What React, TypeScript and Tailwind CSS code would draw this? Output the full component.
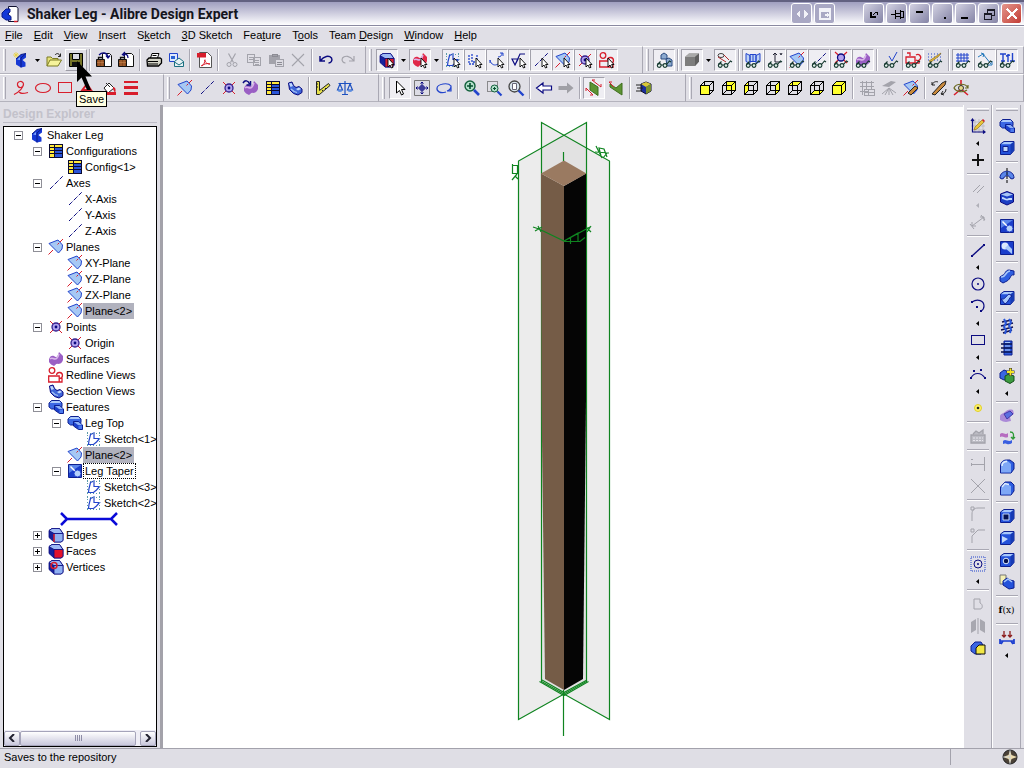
import type { ReactNode } from "react";
import clsx from "clsx";

const INK = "#0b0b80";
const BLUE = "#2244cc";
const SKY = "#a9c6f4";
const RED = "#d81e2c";
const GRAY = "#a3a3ab";

/* ---------- icon primitives ---------- */

const Icon = ({ children, crisp }: { children: ReactNode; crisp?: boolean }) => (
  <svg viewBox="0 0 16 16" className="h-4 w-4 shrink-0 overflow-visible" fill="none" shapeRendering={crisp ? "crispEdges" : undefined} aria-hidden="true">
    {children}
  </svg>
);

const Pointer = () => <path d="M9 6v9l2-2 1.500 3 1.500-.7L12.600 12.500H15z" fill="#fff" stroke="#000" strokeWidth=".9" />;

const Glasses = () => (
  <g stroke="#12352c" strokeWidth="1.100">
    <circle cx="3.200" cy="13.500" r="1.900" fill="#dfeee8" />
    <circle cx="9" cy="13.500" r="1.900" fill="#dfeee8" />
    <path d="M5 13h2M1.500 12.500 4.500 9.500M10.500 12.500l3-3.500 1.500 1" />
  </g>
);

const PlaneShape = () => (
  <>
    <path d="M1 4.500 10 1l4.500 5-.5 4-3.500 4-5-5z" fill="#a6c8f4" stroke={BLUE} />
    <path d="M15 0l-3 3M11 4 9.500 5.500M5 11 .500 15.500" stroke={RED} />
  </>
);

const PointShape = () => (
  <>
    <path d="M2 2l12 12M14 2 2 14" stroke={RED} />
    <circle cx="8" cy="8" r="4" fill="#b3a2ee" stroke="#33208f" strokeWidth="1.300" />
    <circle cx="8" cy="8" r="1.400" fill={INK} />
  </>
);

const SurfaceShape = ({ color = "#9a5fc4" }: { color?: string }) => (
  <>
    <path d="M1 8c1-3 3-4 5-3 2 2 3 1 4-1l1-3 4 4v4c-1 3-3 4-5 4-2-1-2 1-4 2-2-1-4-2-5-4z" fill={color} />
    <path d="M2 8c2-2 3 0 5 0s3-2 4-5" stroke="#d9b6ea" strokeWidth="1.500" />
  </>
);

const SketchShape = () => (
  <>
    <path d="M4.500 3.500 8 2v5.500h5.500l-3 3.500-3 2.500h-5l.5-4z" stroke={BLUE} strokeWidth="1.200" />
    <path d="M1 2.500h13M1 14.500h13M1.500 1v14M13.500 1v14" stroke="#5c9aaa" strokeDasharray="1 2" />
  </>
);

const RedlineShape = () => (
  <g stroke={RED} strokeWidth="1.300">
    <circle cx="4" cy="3.500" r="2.800" />
    <path d="M.700 9h10.500v6H.700zM8.500 8a3 3 0 1 1 3 3.500M11.500 15h2.500v-4" />
  </g>
);

const AxisShape = () => <path d="M2 14 15 1" stroke={INK} strokeDasharray="4 1 1 1" />;

const BoxShape = ({ front = "#3458dd", side = "#16219c", top = "#9db9f5" }: { front?: string; side?: string; top?: string }) => (
  <g stroke={INK} strokeWidth=".8">
    <path d="M1 3.500 4 1.500h7.500l3.500 5v7L13 15H6l-5-4.500z" fill={side} />
    <path d="M1 3.500 4 1.500h7.500l3.500 5H6z" fill={top} />
    <path d="M6 6.500h9V13.500L13 15H6z" fill={front} />
  </g>
);

const TableShape = () => (
  <g shapeRendering="crispEdges">
    <path d="M1.500 1.500h13v13h-13z" fill="#2a55d8" />
    <path d="M2 2h4v12H2zM6 2h8v2H6z" fill="#ffe93b" />
    <path d="M1.500 1.500h13v13h-13zM2 4.500h12M2 7.500h12M2 10.500h12M6.500 2v12" stroke="#0a0a30" />
  </g>
);

const PartShape = () => (
  <>
    <path d="M3 7 8 2.500l5-1v4L9.500 8l3 2.500v4L8 15.500 3 12.500z" fill="#1739d4" />
    <path d="M3 7 8 2.500l5-1L8 6v9.500" stroke="#0a1b88" />
    <path d="M4 7.500 7 5v3z" fill="#7ea5ff" />
  </>
);

/* Blue solid used by the feature column */
const Solid = () => (
  <>
    <path d="M1.500 4 5 1.500h10v9L11.500 14.500h-10z" fill="#2452da" stroke="#0d1f90" />
    <path d="M2 4.200 5.200 2h9.300l-3 2.200z" fill="#a8c8fb" />
    <path d="M11.500 4.500 14.500 2v8.300l-3 4z" fill="#163bb4" />
  </>
);

const ExtrudeShape = () => (
  <>
    <path d="M1 4l2.500-2.500h8L14 4v3l-1 3H3.500L1 8z" fill="#3c68e4" stroke="#0d1f90" />
    <path d="M1.500 4 4 2h7.500L13 4z" fill="#aecbfa" />
    <path d="M6.500 6.500h5l4 3.500v4.500h-4l-5-3.500z" fill="#1c40cc" stroke="#0d1f90" />
    <path d="M7 7h4.500l3.500 3h-4z" fill="#8fb1f6" />
    <path d="M11.500 10.500h3.500v3.500h-3.500z" fill="#4c7aee" />
  </>
);

const TaperShape = () => (
  <>
    <path d="M1.500 1.500h13v13h-13z" fill="#1b3ecb" stroke="#0d1f90" />
    <path d="M2 2h12L2 10z" fill="#5b86ea" />
    <path d="M3.500 3.500l6 6" stroke="#fff" strokeWidth="1.500" />
    <circle cx="10.500" cy="10.500" r="3.500" fill="#b6d1fb" stroke={BLUE} />
  </>
);

const SectionShape = () => (
  <>
    <path d="M1.500 3 5 2l1.500 3.500 2.500 2 3-1 3 2.500v3.500L11 15l-4.500-1.500-4-4z" fill="#3f66d8" stroke={INK} />
    <path d="M2 3.500 4.500 3 6 6 3.500 7zM9 9l3-1.500 2 1.500-3 1.500z" fill="#c2d8fc" />
    <path d="M4 9l3 2.500 3 1" stroke="#a9c6f4" strokeWidth="1.300" />
  </>
);

const CubeView = ({ face, solid }: { face: string; solid?: boolean }) => (
  <>
    {!solid && <path d={face} fill="#ffff2e" />}
    <path d="M1.500 5.500h9v9h-9zM5.500 1.500h9v9h-9zM1.500 5.500l4-4M10.500 5.500l4-4M1.500 14.500l4-4M10.500 14.500l4-4" stroke="#000" />
    {solid && <path d={face} fill="#ffff2e" stroke="#000" />}
  </>
);

const cubeFaces = [
  { label: "Front view", face: "M1.500 5.500h9v9h-9z", solid: true },
  { label: "Back view", face: "M5.500 1.500h9v9h-9z" },
  { label: "Left view", face: "M1.500 5.500l4-4v9l-4 4z" },
  { label: "Right view", face: "M10.500 5.500l4-4v9l-4 4z" },
  { label: "Top view", face: "M1.500 5.500l4-4h9l-4 4z" },
  { label: "Bottom view", face: "M1.500 14.500l4-4h9l-4 4z" },
];

/* ---------- toolbar parts ---------- */

type ToolProps = { label: string; pressed?: boolean; raised?: boolean; disabled?: boolean; crisp?: boolean; children: ReactNode };

const Tool = ({ label, pressed, raised, disabled, crisp, children }: ToolProps) => (
  <button
    type="button"
    aria-label={label}
    disabled={disabled}
    className={clsx(
      "flex h-[22px] w-[22px] shrink-0 items-center justify-center border",
      pressed && "border-t-[#a2a1ab] border-l-[#a2a1ab] border-r-white border-b-white bg-[#efeef3]",
      raised && "border-t-white border-l-white border-r-[#9d9ca6] border-b-[#9d9ca6]",
      !pressed && !raised && "border-transparent",
    )}
  >
    <Icon crisp={crisp}>{children}</Icon>
  </button>
);

const Drop = ({ label }: { label: string }) => (
  <button type="button" aria-label={label} className="flex h-[22px] w-[11px] shrink-0 items-center justify-center">
    <svg viewBox="0 0 5 3" className="h-[3px] w-[5px]"><path d="M0 0h5L2.500 3z" fill="#000" /></svg>
  </button>
);

const Flyout = ({ label, disabled }: { label: string; disabled?: boolean }) => (
  <button type="button" aria-label={label} disabled={disabled} className="flex h-3 w-[22px] shrink-0 items-center justify-center">
    <svg viewBox="0 0 3 5" className="h-[5px] w-[3px]"><path d="M3 0v5L0 2.500z" fill={disabled ? "#b0b0b8" : "#000"} /></svg>
  </button>
);

const Sep = () => <span className="mx-[2px] h-[22px] w-[2px] shrink-0 border-l border-r border-l-[#a9a8b3] border-r-white" />;
const HSep = () => <span className="my-[2px] h-[2px] w-[22px] shrink-0 border-t border-b border-t-[#a9a8b3] border-b-white" />;

const Toolbar = ({ label, className, children }: { label: string; className: string; children: ReactNode }) => (
  <div role="toolbar" aria-label={label} className={clsx("flex h-7 items-center border-t border-r border-b border-t-white border-r-[#a9a8b3] border-b-[#b4b3bd]", className)}>
    <span className="mr-1 ml-[3px] h-[22px] w-[3px] shrink-0 border-r border-l border-r-[#a9a8b3] border-l-white" />
    {children}
  </div>
);

const SideBar = ({ label, children }: { label: string; children: ReactNode }) => (
  <div role="toolbar" aria-label={label} className="flex w-[29px] flex-col items-center border-r border-l border-r-[#a9a8b3] border-l-white">
    <span className="mt-[3px] mb-1 h-[3px] w-[22px] shrink-0 border-t border-b border-t-white border-b-[#a9a8b3]" />
    {children}
  </div>
);

/* ---------- title bar ---------- */

const CaptionButton = ({ label, className, children }: { label: string; className?: string; children: ReactNode }) => (
  <button
    type="button"
    aria-label={label}
    className={clsx("flex h-[21px] w-[21px] items-center justify-center rounded-[3px] border border-white", className ?? "bg-linear-to-br from-[#d3d2e2] to-[#8584a6]")}
  >
    <Icon crisp>{children}</Icon>
  </button>
);

const TitleBar = () => (
  <header className="flex h-[26px] shrink-0 items-center border-t-2 border-b border-t-[#626181] border-b-[#8a89a0] bg-linear-to-b from-[#a09fc0] via-[#cfcedf] to-white pr-[2px] pl-[2px]">
    <Icon>
      <path d="M6.500.500h8l1.500 2v13h-9.500z" fill="#fff" stroke="#101030" />
      <path d="M0 7l4-4h4v3L5.500 8 9 10.500V14H4L0 11z" fill="#1238d8" stroke="#0a1b88" />
      <path d="M12 15.500h3.500" stroke={RED} strokeWidth="1.500" />
    </Icon>
    <h1 className="ml-[9px] flex-1 truncate font-['Roboto',sans-serif] text-[14px] leading-5 font-bold text-[#151520]">Shaker Leg - Alibre Design Expert</h1>
    <div className="flex gap-[2px]">
      <CaptionButton label="Move across screens" className="bg-[#a9a8c4]">
        <path d="M6 4v8L2 8zM10 4v8l4-4z" fill="#f2f2f8" />
      </CaptionButton>
      <CaptionButton label="Maximize across screens" className="bg-[#a9a8c4]">
        <path d="M3 3h10v10H3zM3 5h10M8 9h5M10.500 7v4" stroke="#f2f2f8" strokeWidth="1.500" />
      </CaptionButton>
      <span className="w-[24px]" />
      <CaptionButton label="Send back">
        <path d="M4 6h2v4h4v2H4zM6 9l3-3h3v3h-1V7H9.500L7 10z" fill="#000" />
      </CaptionButton>
      <CaptionButton label="Pin window">
        <path d="M2 8.500h4M6.500 4v9M7 7.500h4v3H7M11.500 4v9M12 5.500h2v6h-2" stroke="#000" />
      </CaptionButton>
      <CaptionButton label="Roll up"><path d="M4 5h7v2H4z" fill="#000" /></CaptionButton>
      <CaptionButton label="Minimize to tray"><path d="M9 11h2v2H9z" fill="#000" /></CaptionButton>
      <CaptionButton label="Minimize"><path d="M3 11h7v2H3z" fill="#000" /></CaptionButton>
      <CaptionButton label="Restore">
        <path d="M3.500 7.500h7v6h-7zM3.500 8.500h7M6.500 7V3.500h7v6H11M6.500 4.500h7" stroke="#1a1a24" />
      </CaptionButton>
      <CaptionButton label="Close" className="bg-linear-to-br from-[#e3958c] to-[#c23a35]">
        <path d="M3 3l10 10M13 3 3 13" stroke="#fff" strokeWidth="2" />
      </CaptionButton>
    </div>
  </header>
);

/* An ampersand marks the access key */
const menus = ["&File", "&Edit", "&View", "&Insert", "S&ketch", "&3D Sketch", "Fea&ture", "T&ools", "Team &Design", "&Window", "&Help"];

const MenuBar = () => (
  <nav className="flex h-[20px] shrink-0 items-center gap-[11px] border-t border-white pb-1 pl-[5px]">
    {menus.map((item) => {
      const [before, after] = item.split("&");
      return (
        <button key={item} type="button" className="whitespace-nowrap">
          {before}
          <u>{after[0]}</u>
          {after.slice(1)}
        </button>
      );
    })}
  </nav>
);

/* ---------- top toolbars ---------- */

const SaveTool = () => (
  <div className="relative">
    <Tool label="Save" raised>
      <path d="M1.500 1.500h13v13h-13z" fill="#77762a" stroke="#000" />
      <path d="M4.500 1.500h7v6h-7z" fill="#d9d9e2" stroke="#000" />
      <path d="M4 10h8v4.500H4z" fill="#111" />
      <path d="M9 11h2v3H9z" fill="#ddd" />
    </Tool>
    <svg viewBox="0 0 17 30" className="pointer-events-none absolute top-[12px] left-[12px] z-20 h-[30px] w-[17px]" aria-hidden="true">
      <path d="M0 0v21l4.500-4.500L10 29h4L8.500 15.500H15z" fill="#000" />
    </svg>
    <span role="tooltip" className="absolute top-[42px] left-[11px] z-10 border border-black bg-[#ffffe1] px-[2px] leading-[14px]">Save</span>
  </div>
);

const StandardBar = () => (
  <Toolbar label="Standard" className="w-[366px]">
    <Tool label="New">
      <PartShape />
      <path d="M3 0v6M0 3h6M1 1l4 4M5 1 1 5" stroke="#e8d23a" strokeWidth=".8" />
    </Tool>
    <Drop label="New options" />
    <Tool label="Open">
      <path d="M1 14V5h4l1.500 1.500H12V9" fill="#e6e27a" stroke="#7a7a22" />
      <path d="M1 14l3-6h11.500l-3.500 6z" fill="#f6f39a" stroke="#7a7a22" />
      <path d="M9 3c1.500-2 4-2 5 1M14.500 1.500V4.500H12" stroke="#222" />
    </Tool>
    <SaveTool />
    <Sep />
    {["Check in", "Check out"].map((label, i) => (
      <Tool key={label} label={label}>
        <path d="M6.500 1.500h7l2 2v11h-9z" fill="#fff" stroke="#111" />
        <path d="M.500 7.500h8v7h-8z" fill="#8a4a1e" stroke="#111" />
        <path d="M2.500 7.500V5.500h4v2" stroke="#111" strokeWidth="1.300" />
        <path d="M1 10.500h7M3 8v6M6 8v6" stroke="#c98750" strokeWidth=".6" />
        <path d={i ? "M10 6c0-4-3-4.500-5-3.500M7 0 4.500 2.500 7 4" : "M3 3c3-3 8-3 9 2M10 3.500 12 6l2-2.500"} stroke={INK} strokeWidth="1.300" />
      </Tool>
    ))}
    <Sep />
    <Tool label="Print">
      <path d="M4.500 6 6 1.500h7L11.500 6" fill="#fff" stroke="#000" />
      <path d="M1 8l2-2h11l1.500 1v4l-3 3H1.500z" fill="#d5d5c8" stroke="#000" strokeWidth="1.300" />
      <path d="M2 9.500h10M2 12h10M6.500 3.500h4" stroke="#000" />
    </Tool>
    <Tool label="Print preview">
      <path d="M1.500 1.500h8v8h-8z" fill="#dfe9fc" stroke={BLUE} />
      <path d="M3 4h4v3H3z" fill="#2b63d4" />
      <path d="M6.500 9.500 11 6l4.500 3.500v5h-9z" fill="#e8f2f5" stroke="#1b6f80" />
      <path d="M6.500 10l4.500 3 4.500-3" stroke="#1b6f80" />
    </Tool>
    <Sep />
    <Tool label="Publish to PDF">
      <path d="M3.500.500h8l4 4v11h-12z" fill="#fff" stroke="#555" />
      <path d="M1 1h9v4.500H1z" fill={RED} />
      <path d="M5 14c3-1 4-4 4-6.500M8.500 8c1 3 3 4 5.500 4-4-1-6 0-8 2" stroke={RED} />
    </Tool>
    <Sep />
    <Tool label="Cut" disabled>
      <path d="M4.500 1.500l5 9M11.500 1.500l-5 9" stroke={GRAY} strokeWidth="1.200" />
      <circle cx="5" cy="12.500" r="2" stroke={GRAY} />
      <circle cx="11" cy="12.500" r="2" stroke={GRAY} />
    </Tool>
    <Tool label="Copy" disabled crisp>
      <path d="M1.500 2.500h7v8h-7zM7.500 5.500h7v8h-7zM3 5h4M3 7h4M9 8h4M9 10h4M9 12h4" stroke={GRAY} />
    </Tool>
    <Tool label="Paste" disabled crisp>
      <path d="M1 3h11v9H1z" fill={GRAY} />
      <path d="M7.500 7.500h8v7h-8z" fill="#dcdbe2" stroke={GRAY} />
      <path d="M4 2h5v2H4zM9 10h5M9 12h5" stroke="#8c8c94" />
    </Tool>
    <Tool label="Delete" disabled><path d="M2 2l12 12M14 2 2 14" stroke={GRAY} strokeWidth="1.100" /></Tool>
    <Sep />
    <Tool label="Undo"><path d="M2 4v5h5M2.500 8.500C6 4 11 3 13.500 6c1.500 3-1 5-3 5" stroke={INK} strokeWidth="1.500" /></Tool>
    <Tool label="Redo" disabled><path d="M14 4v5H9M13.500 8.500C10 4 5 3 2.500 6c-1.500 3 1 5 3 5" stroke={GRAY} strokeWidth="1.200" /></Tool>
  </Toolbar>
);

const SelectionBar = () => (
  <Toolbar label="Selection filters" className="w-[277px]">
    <Tool label="Select faces" pressed><BoxShape front={RED} /><Pointer /></Tool>
    <Drop label="Face filters" />
    <Tool label="Select surfaces" pressed><SurfaceShape color="#e02848" /><Pointer /></Tool>
    <Drop label="Surface filters" />
    <Tool label="Select sketches" pressed><SketchShape /><Pointer /></Tool>
    <Tool label="Select sketch figures" pressed><path d="M2 3v9h5M5 2v8h5V3" stroke={BLUE} strokeDasharray="2 1" strokeWidth="1.300" /><Pointer /></Tool>
    <Tool label="Select dimensions" pressed><path d="M1 8c1 5 5 6 8 4M1 8v3M9 5c3 0 4-2 4-4M11 1h3v3" stroke={BLUE} /><Pointer /></Tool>
    <Tool label="Select annotations" pressed><path d="M1 7h6l-3 6zM4 13 9 2h5" stroke={INK} strokeWidth="1.200" /><Pointer /></Tool>
    <Tool label="Select axes" pressed><AxisShape /><Pointer /></Tool>
    <Tool label="Select planes" pressed><PlaneShape /><Pointer /></Tool>
    <Tool label="Select points" pressed><PointShape /><Pointer /></Tool>
    <Tool label="Select redlines" pressed><RedlineShape /><Pointer /></Tool>
  </Toolbar>
);

const VisibilityBar = () => (
  <Toolbar label="Visibility" className="flex-1">
    <Tool label="Show assembly parts" pressed>
      <path d="M5 3l3-2 3 2v4H5zM10 7l3-1 3 2v6h-5z" fill="#8ba9cf" stroke="#2b4a80" />
      <Glasses />
    </Tool>
    <Sep />
    <Tool label="Shading" pressed>
      <path d="M1 5l4-3.500h10v8L11 14H1z" fill="#7c7c7c" />
      <path d="M1 5l4-3.500h10L11 5z" fill="#a9a9a9" />
      <path d="M11 5l4-3.500v8L11 14z" fill="#5f5f5f" />
    </Tool>
    <Drop label="Shading modes" />
    <Tool label="Show edges" pressed>
      <ellipse cx="4" cy="3.500" rx="3" ry="2" stroke="#444" />
      <path d="M1 5l8 5M7 3l5 5" stroke="#b02a2a" />
      <Glasses />
    </Tool>
    <Sep />
    <Tool label="Show reference geometry" pressed>
      <path d="M1 1.500l4 2v8l-4-2zM15 1.500l-4 2v8l4-2zM5 2.500h6v7H5z" fill="#bdd2f5" stroke={BLUE} />
      <path d="M8 2v7" stroke={BLUE} />
      <Glasses />
    </Tool>
    <Tool label="Show coordinate system" pressed><path d="M8 10V1M6 3l2-2 2 2M8 10h6M13 1l1 2 1-2" stroke="#223" /><Glasses /></Tool>
    <Tool label="Show planes" pressed><PlaneShape /><Glasses /></Tool>
    <Tool label="Show axes" pressed><AxisShape /><Glasses /></Tool>
    <Tool label="Show points" pressed>
      <path d="M2 0l12 11M14 0 2 11" stroke={RED} strokeWidth="1.200" />
      <circle cx="8" cy="5.500" r="3.500" fill="#b3a2ee" stroke={INK} strokeWidth="1.300" />
      <Glasses />
    </Tool>
    <Tool label="Show surfaces" pressed><SurfaceShape /><Glasses /></Tool>
    <Sep />
    <Tool label="Show dimensions"><path d="M6 4l3 5 5-9" stroke={BLUE} /><Glasses /></Tool>
    <Tool label="Show redlines" pressed><path d="M1 5h9v6H1zM2 1h3v3M11 3a3 3 0 1 1 0 5M10 11h4V8" stroke={RED} strokeWidth="1.300" /><Glasses /></Tool>
    <Tool label="Show sketch mode">
      <path d="M1 2h13M1 5h13M1 8h13" stroke={BLUE} strokeDasharray="1 2" />
      <path d="M2 9l9-6 3-2-2 3-8 6z" fill="#e0b63a" stroke="#8a6a10" strokeWidth=".6" />
      <Glasses />
    </Tool>
    <Sep />
    <Tool label="Show grid" pressed><path d="M1 3h13M1 6h13M1 9h13M3 1v9M6 1v9M9 1v9M12 1v9" stroke={BLUE} /><Glasses /></Tool>
    <Tool label="Show constraints" pressed><path d="M1 5l5-3 8 10M4 1l3 1-1 3M15 9v4h-4" stroke="#2277bb" /><Glasses /></Tool>
    <Tool label="Show sketch dimensions" pressed><path d="M1 2h6M4 2v8M2 9h4M9 2v8M7 4l4-1M13.500 1v8M11 9h5" stroke={BLUE} strokeWidth="1.400" /><Glasses /></Tool>
  </Toolbar>
);

const RedlineBar = () => (
  <Toolbar label="Redline" className="w-[164px]">
    <Tool label="Redline freehand"><path d="M1 14.500C6 12 10 8 10.500 4 10 0 4 1 4.500 5c1 4 6 3 6-1M6 10.500c0 4 5 3 9 2" stroke={RED} strokeWidth="1.200" /></Tool>
    <Tool label="Redline ellipse"><ellipse cx="8" cy="8" rx="7.500" ry="4.500" stroke={RED} strokeWidth="1.200" /></Tool>
    <Tool label="Redline rectangle" crisp><path d="M1.500 2.500h13v10h-13z" stroke={RED} /></Tool>
    <Tool label="Redline text"><path d="M1 13 8 4l6 9M4 10h8" stroke={RED} strokeWidth="2" /></Tool>
    <Tool label="Redline color">
      <path d="M3 8l5-5 5 5-6 5z" fill="#fff" stroke="#222" />
      <path d="M5 3l4 4" stroke="#222" />
      <path d="M12 7c3 0 3 4 2 6l-2-4zM1 12h14v3H1z" fill={RED} />
    </Tool>
    <Tool label="Redline weight" crisp><path d="M1 1h14v2H1zM1 6h14v3H1zM1 12h14v3H1z" fill={RED} /></Tool>
  </Toolbar>
);

const InsertBar = () => (
  <Toolbar label="Reference" className="w-[215px]">
    <Tool label="Insert plane"><PlaneShape /></Tool>
    <Tool label="Insert axis"><AxisShape /></Tool>
    <Tool label="Insert point"><PointShape /></Tool>
    <Tool label="Insert surface"><SurfaceShape /><path d="M0 3C2 0 5 0 6.500 4M7.500 1v4h-4" stroke={INK} strokeWidth="1.500" /></Tool>
    <Tool label="Configurations"><TableShape /></Tool>
    <Tool label="Section view"><SectionShape /></Tool>
    <Sep />
    <Tool label="Measure">
      <path d="M1.500 1.500h3v9l9-7 1.500 2-10.500 9h-3z" fill="#e6e04a" stroke="#222" />
      <path d="M2 4h1M2 7h1M7 10l1 1M10 8l1 1" stroke="#222" />
    </Tool>
    <Tool label="Physical properties">
      <path d="M8 1v13M5 14.500h6M1.500 3.500h13M3 4 .500 10h5zM13 4l-2.500 6h5z" stroke="#1c50c0" strokeWidth="1.200" />
      <path d="M.500 10h5a2.500 2 0 0 1-5 0M10.500 10h5a2.500 2 0 0 1-5 0" fill="#5b8de0" />
    </Tool>
  </Toolbar>
);

const ViewBar = () => (
  <Toolbar label="View" className="w-[307px]">
    <Tool label="Select" pressed><path d="M4.500 1v12l3-2.500L9.500 15l2-1-2-4.500H13z" fill="#fff" stroke="#000" /></Tool>
    <Tool label="Pan">
      <path d="M.500.500h15v15H.500z" fill="#dcdce4" stroke="#777" />
      <path d="M8 2v12M2 8h12M6.500 3.500 8 2l1.500 1.500M6.500 12.500 8 14l1.500-1.500M3.500 6.500 2 8l1.500 1.500M12.500 6.500 14 8l-1.500 1.500M6 6h4v4H6z" stroke={INK} />
    </Tool>
    <Tool label="Rotate"><path d="M10 12C4 14 .500 11 1 8c.500-4 11-6 14-2 0 2-1 4-4 5M15 5.500V11h-4" stroke={BLUE} strokeWidth="1.200" /></Tool>
    <Sep />
    <Tool label="Zoom in"><circle cx="6" cy="6" r="5" fill="#b4e0cb" stroke="#12603c" strokeWidth="1.400" /><path d="M6 3v6M3 6h6" stroke="#065030" strokeWidth="1.600" /><path d="M10 10l5 5" stroke={BLUE} strokeWidth="2.600" /></Tool>
    <Tool label="Zoom to window"><path d="M1.500 1.500h10v10h-10z" stroke="#333" strokeDasharray="1 1" /><circle cx="8.500" cy="8.500" r="3.500" fill="#b4e0cb" stroke="#12603c" /><path d="M8.500 7v3M7 8.500h3" stroke="#065030" /><path d="M11.500 11.500l4 4" stroke={BLUE} strokeWidth="2.200" /></Tool>
    <Tool label="Zoom to fit"><circle cx="6.500" cy="6.500" r="5.500" fill="#d8e4ec" stroke="#444" strokeWidth="1.300" /><path d="M4.500 3.500h4v6h-4z" fill="#fff" stroke="#667" /><path d="M10.500 10.500l5 5" stroke={BLUE} strokeWidth="2.400" /></Tool>
    <Sep />
    <Tool label="Previous view"><path d="M.500 8 7 3v3h8.500v4H7v3z" fill="#fff" stroke={INK} strokeWidth="1.200" /></Tool>
    <Tool label="Next view" disabled><path d="M15.500 8 9 2.500V6H.500v4H9v3.500z" fill="#a0a0a6" /></Tool>
    <Sep />
    <Tool label="Orient to plane" pressed><path d="M4 2l8 5v8.500L4 10z" fill="#5d9433" stroke="#3f6e1f" /><path d="M0 8l7 7M0 8v3M7 15H4M6 0l9 7M6 0h3M15 7V4" stroke={RED} /></Tool>
    <Tool label="Flip plane"><path d="M2 4l6 4 6-5v12L2 7z" fill="#5d9433" stroke="#3f6e1f" /><path d="M1 2l5 5M1 2h3" stroke={RED} /></Tool>
    <Sep />
    <Tool label="Regenerate">
      <path d="M5 4l5-2 5 2v7l-5 3-5-3z" fill="#1b2f9c" stroke="#0a0a30" />
      <path d="M5 4l5-2 5 2-5 3z" fill="#d9c838" />
      <path d="M10 7l5-3v7l-5 3z" fill="#7a8f2c" />
      <path d="M0 5h6M1 8h6M0 11h6" stroke="#222" />
    </Tool>
  </Toolbar>
);

const OrientationBar = () => (
  <Toolbar label="Orientation" className="flex-1">
    {cubeFaces.map(({ label, face, solid }) => (
      <Tool key={label} label={label} crisp><CubeView face={face} solid={solid} /></Tool>
    ))}
    <Tool label="Isometric view" crisp>
      <path d="M1.500 5.500l4-4h9v9l-4 4h-9z" fill="#ffff2e" stroke="#000" />
      <path d="M1.500 5.500h9v9M10.500 5.500l4-4" stroke="#000" />
    </Tool>
    <Sep />
    <Tool label="Sketch grid" disabled crisp><path d="M1 2.500h14M1 6.500h14M1 11.500h9M3.500 1v14M7.500 1v8M12.500 1v8M5 9h10v6H5zM5 12h10M9 9v6" stroke={GRAY} /></Tool>
    <Tool label="Fan dimension" disabled><path d="M1 6l9-5 5 1-7 5z" fill={GRAY} /><path d="M8 8l7 5M8 8l-7 6M8 8v7M8 8l4 7M8 8l-4 7" stroke={GRAY} /></Tool>
    <Tool label="Edit plane">
      <PlaneShape />
      <path d="M5 13l7-7 3 2-7 7z" fill="#c9893c" stroke="#222" />
    </Tool>
    <Sep />
    <Tool label="Edit sketch">
      <path d="M1 14 11 3l4-2-1 4L4 15z" fill="#c9893c" stroke="#222" />
      <path d="M1 5c1-3 4-4 6-3M1 2v3h3M15 9c0 3-2 5-5 5M12 11l-2 3 3 1" stroke="#222" />
    </Tool>
    <Tool label="Rotate about axis"><path d="M8 0v6M8 9l-7 6M8 9l7 6" stroke={RED} strokeWidth="1.600" /><path d="M15 8c-2-5-12-5-14 0 2 4 9 5 13 2M15 5v3h-3" stroke="#6c6a22" strokeWidth="1.200" /><circle cx="8" cy="8" r="2.500" fill="#e8d98a" stroke="#333" /></Tool>
  </Toolbar>
);

/* ---------- design explorer ---------- */

type Kind = "part" | "table" | "axis" | "plane" | "point" | "surface" | "redline" | "section" | "extrude" | "taper" | "sketch" | "edge" | "face" | "vertex";

const kindIcons: Record<Kind, ReactNode> = {
  part: <PartShape />,
  table: <TableShape />,
  axis: <AxisShape />,
  plane: <PlaneShape />,
  point: <PointShape />,
  surface: <SurfaceShape />,
  redline: <RedlineShape />,
  section: <SectionShape />,
  extrude: <ExtrudeShape />,
  taper: <TaperShape />,
  sketch: <SketchShape />,
  edge: <><BoxShape front="#8fb0f2" /><path d="M6 7v8" stroke={RED} strokeWidth="1.500" /></>,
  face: <BoxShape front="#e3122a" />,
  vertex: <><BoxShape front="#8fb0f2" /><circle cx="6" cy="6.500" r="3" stroke={RED} strokeWidth="1.500" /></>,
};

type Row = { level: number; kind: Kind; text: string; open?: boolean; selected?: boolean; focused?: boolean };

const modelRows: Row[] = [
  { level: 0, kind: "part", text: "Shaker Leg", open: true },
  { level: 1, kind: "table", text: "Configurations", open: true },
  { level: 2, kind: "table", text: "Config<1>" },
  { level: 1, kind: "axis", text: "Axes", open: true },
  { level: 2, kind: "axis", text: "X-Axis" },
  { level: 2, kind: "axis", text: "Y-Axis" },
  { level: 2, kind: "axis", text: "Z-Axis" },
  { level: 1, kind: "plane", text: "Planes", open: true },
  { level: 2, kind: "plane", text: "XY-Plane" },
  { level: 2, kind: "plane", text: "YZ-Plane" },
  { level: 2, kind: "plane", text: "ZX-Plane" },
  { level: 2, kind: "plane", text: "Plane<2>", selected: true },
  { level: 1, kind: "point", text: "Points", open: true },
  { level: 2, kind: "point", text: "Origin" },
  { level: 1, kind: "surface", text: "Surfaces" },
  { level: 1, kind: "redline", text: "Redline Views" },
  { level: 1, kind: "section", text: "Section Views" },
  { level: 1, kind: "extrude", text: "Features", open: true },
  { level: 2, kind: "extrude", text: "Leg Top", open: true },
  { level: 3, kind: "sketch", text: "Sketch<1>" },
  { level: 2, kind: "plane", text: "Plane<2>", selected: true },
  { level: 2, kind: "taper", text: "Leg Taper", open: true, focused: true },
  { level: 3, kind: "sketch", text: "Sketch<3>" },
  { level: 3, kind: "sketch", text: "Sketch<2>" },
];

const topologyRows: Row[] = [
  { level: 1, kind: "edge", text: "Edges", open: false },
  { level: 1, kind: "face", text: "Faces", open: false },
  { level: 1, kind: "vertex", text: "Vertices", open: false },
];

const indents = ["pl-[10px]", "pl-[29px]", "pl-[48px]", "pl-[67px]"];

const TreeRow = ({ level, kind, text, open, selected, focused }: Row) => (
  <li role="treeitem" aria-level={level + 1} aria-expanded={open} aria-selected={!!selected} className={clsx("flex h-4 items-center", indents[level])}>
    {open === undefined ? (
      <span className="w-[9px] shrink-0" />
    ) : (
      <button type="button" aria-label={open ? `Collapse ${text}` : `Expand ${text}`} className="h-[9px] w-[9px] shrink-0">
        <svg viewBox="0 0 9 9" className="h-[9px] w-[9px]" fill="none" shapeRendering="crispEdges">
          <path d="M.500.500h8v8h-8z" fill="#fff" stroke="#8f8f97" />
          <path d={open ? "M2 4.500h5" : "M2 4.500h5M4.500 2v5"} stroke="#000" />
        </svg>
      </button>
    )}
    <span className="ml-[6px] flex"><Icon>{kindIcons[kind]}</Icon></span>
    <span className={clsx("border px-[1px] leading-[14px] whitespace-nowrap", selected && "bg-[#b1b2be]", focused ? "border-dotted border-black" : "border-transparent")}>{text}</span>
  </li>
);

const ScrollButton = ({ label, d }: { label: string; d: string }) => (
  <button type="button" aria-label={label} className="flex h-[15px] w-4 shrink-0 items-center justify-center rounded-[2px] border border-[#a5a4ba] bg-linear-to-b from-white to-[#c9c8dc]">
    <svg viewBox="0 0 8 8" className="h-2 w-2" fill="none"><path d={d} stroke="#222230" strokeWidth="2" /></svg>
  </button>
);

const DesignExplorer = () => (
  <aside className="flex w-[163px] shrink-0 flex-col border-r-[3px] border-[#a3a2aa] pr-[3px] pl-[3px]">
    <h2 className="h-[18px] border-b border-[#bdbcc6] text-[12px] leading-[18px] font-bold text-[#c3c2cb]">Design Explorer</h2>
    <div className="mt-[3px] mb-[1px] flex min-h-0 flex-1 flex-col overflow-hidden border border-black bg-white">
      <ul role="tree" aria-label="Design Explorer" className="min-h-0 flex-1 overflow-hidden">
        {modelRows.map((row, i) => <TreeRow key={i} {...row} />)}
        <li role="separator" className="flex h-4 items-center pl-[56px]">
          <svg viewBox="0 0 58 14" className="h-[14px] w-[58px]" fill="none" aria-hidden="true">
            <path d="M1 1l6 6-6 6M57 1l-6 6 6 6M7 7h44" stroke="#0a0ad8" strokeWidth="2.500" />
          </svg>
        </li>
        {topologyRows.map((row) => <TreeRow key={row.text} {...row} />)}
      </ul>
      <div className="flex h-4 shrink-0 items-center bg-[#efeef6]">
        <ScrollButton label="Scroll left" d="M6 0 2 4l4 4" />
        <div className="mr-1 flex h-[15px] flex-1 items-center justify-center gap-[1px] rounded-[2px] border border-[#a5a4ba] bg-linear-to-b from-white to-[#c9c8dc]">
          {[0, 1, 2, 3].map((n) => <span key={n} className="h-[6px] w-[1px] bg-[#8e8da6]" />)}
        </div>
        <ScrollButton label="Scroll right" d="M2 0l4 4-4 4" />
      </div>
    </div>
  </aside>
);

/* ---------- model view ---------- */

const ModelView = () => (
  <main className="mt-[2px] min-w-0 flex-1 bg-white">
    <svg viewBox="163 107 800 641" preserveAspectRatio="xMidYMin meet" className="h-full w-full" fill="none" role="img" aria-label="Shaker leg model">
      <path d="M518.500 161 586.500 122.500V681.500L518.500 719.500z" fill="#ececec" />
      <path d="M609.500 161 541.500 122.500V681.500L609.500 719.500z" fill="#ececec" />
      <path d="M541.500 147.500 564 135l22.500 12.500V681.500L564 694l-22.500-12.500z" fill="#e2e2e2" />
      {/* datum planes, then the leg over them */}
      <g stroke="#0f8420" strokeWidth="1.200">
        <path d="M541.500 122.500 609.500 161V719.500L541.500 681.500z" />
        <path d="M586.500 122.500 518.500 161V719.500L586.500 681.500z" />
      </g>
      <path d="M541 173.500 564 186v504l-19-11L541.500 400z" fill="#755c47" />
      <path d="M564 186l22-12.500V400L583 679l-19 11z" fill="#050505" />
      <path d="M541 173.500 564 160.500l22.500 13L564 186z" fill="#9a7a61" />
      <g stroke="#0f8420" strokeWidth="1.200">
        <path d="M563.500 152v9M563.500 690v46M539.500 681.500 564 695.500l24.500-14M542 680l22 12.500 23-12.500" />
        <path d="M533 227l6 2 25 12 26-14M535 231l7-4M538 226l3 6M564 241l14-8v9M564 241.500h16l5-4M570.500 238v6M586 227l5 5M587 232l4-6" />
        <path d="M512.500 164v10M512.500 165.500h5v8h-5M517 174l-5 6M515 176l3 3" />
        <path d="M595 152l14 1M596 146l6 12M601 156l-2-8 5 1 3 8M603 158l4-5" />
      </g>
    </svg>
  </main>
);

/* ---------- side toolbars ---------- */

const SketchBar = () => (
  <SideBar label="Sketch tools">
    <Tool label="Activate 2D sketch"><path d="M1 4h14M1 8h14M1 12h14M5 1v14M9 1v14M13 1v14" stroke="#b2b2ba" strokeWidth=".7" /><path d="M2.500 1v13h13M1 3l1.500-2L4 3M13 12.500l2 1.500-2 1.500" stroke={INK} strokeWidth="1.200" /><path d="M4 12l1-3 7-7 2 2-7 7z" fill="#e8c53a" stroke="#8a6a10" strokeWidth=".6" /><path d="M12 2l1-1 2 2-1 1z" fill={RED} /></Tool>
    <Flyout label="Sketch modes" />
    <Tool label="Select" crisp><path d="M7 2h2v12H7zM2 7h12v2H2z" fill="#111" /></Tool>
    <HSep />
    <Tool label="Parallel constraint" disabled><path d="M3 12l7-7M7 13l7-7" stroke={GRAY} /></Tool>
    <Flyout label="Constraints" disabled />
    <Tool label="Dimension" disabled><path d="M2 12 14 3M10 3h4v4M2 8v4h4M0 10l4 5M11 1l4 5" stroke={GRAY} /></Tool>
    <HSep />
    <Tool label="Line"><path d="M2 14 14 3" stroke={INK} strokeWidth="1.400" /><path d="M1 13h2v2H1zM13 2h2v2h-2z" fill={INK} /></Tool>
    <Flyout label="Lines" />
    <Tool label="Circle"><circle cx="8" cy="8" r="6" stroke={INK} strokeWidth="1.200" /><circle cx="8" cy="8" r="1" fill={INK} /></Tool>
    <Tool label="Arc"><path d="M2 4c6-4 12-1 12 4 0 2-1 4-3 5" stroke={INK} strokeWidth="1.200" /><path d="M1 3h2v2H1zM10 12h2v2h-2zM6 8h2v2H6z" fill={INK} /></Tool>
    <Flyout label="Arcs" />
    <Tool label="Rectangle" crisp><path d="M1.500 3.500h13v9h-13z" stroke={INK} strokeWidth="1.300" /></Tool>
    <Flyout label="Rectangles" />
    <Tool label="Spline"><path d="M1 12c3-6 10-6 14 0" stroke={INK} strokeWidth="1.200" /><path d="M0 11h2v2H0zM3 4h2v2H3zM10 3h2v2h-2zM14 11h2v2h-2z" fill={INK} /></Tool>
    <Flyout label="Curves" />
    <Tool label="Point"><circle cx="8" cy="8" r="3.500" fill="#fff36b" stroke="#e0cf28" /><circle cx="8" cy="8" r="1.300" fill="#222" /></Tool>
    <HSep />
    <Tool label="Enter values" disabled><path d="M1 7h14v8H1zM3 6l3-3 3 2 4-3v4" stroke={GRAY} fill="#bcbcc4" strokeWidth="1.300" /><path d="M3 10h10M3 12.500h10" stroke="#e6e5ec" strokeDasharray="2 1" /></Tool>
    <HSep />
    <Tool label="Trim" disabled crisp><path d="M1 3h2M1 8.500h13M14.500 1v14M1 7v3" stroke={GRAY} /></Tool>
    <Tool label="Extend" disabled><path d="M1 1l14 14M15 1 1 15" stroke={GRAY} /></Tool>
    <HSep />
    <Tool label="Sketch fillet" disabled><path d="M2 15V8c0-4 2-6 6-6h7M1 1h3v3H1z" stroke={GRAY} /></Tool>
    <Tool label="Sketch chamfer" disabled><path d="M2 15V8l6-6h7M1 1h3v3H1z" stroke={GRAY} /></Tool>
    <HSep />
    <Tool label="Project to sketch"><path d="M1 1h14v14H1z" stroke={BLUE} strokeDasharray="1 1" /><circle cx="8" cy="8" r="4" stroke={INK} /><circle cx="8" cy="8" r="1" fill={INK} /></Tool>
    <Flyout label="Project options" />
    <HSep />
    <Tool label="Offset" disabled><path d="M4 3h6v4c3 1 3 6 0 6H4z" stroke={GRAY} /></Tool>
    <Tool label="Mirror" disabled><path d="M1 4l5-3v11l-5 3zM15 4l-5-3v11l5 3z" fill="#a8a8b0" /><path d="M8 0v16" stroke={GRAY} /></Tool>
    <Tool label="Fill region"><path d="M1 6l4-4h6l2 3-2 9H5l-4-3z" fill="#3a66e2" stroke="#0d1f90" /><path d="M6 8l3-3h6v9H6z" fill="#f2e846" stroke="#111" /></Tool>
  </SideBar>
);

const FeatureBar = () => (
  <SideBar label="Feature tools">
    <Tool label="Extrude boss"><ExtrudeShape /></Tool>
    <Tool label="Extrude cut"><Solid /><path d="M4 6.500h5v5H4z" fill="#c2d8fc" stroke="#0d1f90" /></Tool>
    <HSep />
    <Tool label="Revolve boss"><path d="M1 10C1 1 15 1 15 10l-2 1-2-1c0-3-6-3-6 0l-2 1z" fill="#5a86ea" stroke="#0d1f90" /><path d="M8 0v16" stroke="#000" strokeDasharray="3 1" /></Tool>
    <Tool label="Revolve cut">
      <path d="M1.500 4 8 1.500 14.500 4v8L8 15l-6.500-3z" fill="#1c3fc4" stroke={INK} />
      <path d="M2 4.500 8 2.500l6 2-6 2z" fill={SKY} />
      <path d="M3 8c3 0 4 3 7 1l3 0" stroke="#c2d8fc" strokeWidth="1.800" />
    </Tool>
    <HSep />
    <Tool label="Loft boss"><TaperShape /></Tool>
    <Tool label="Loft cut"><path d="M1.500 1.500h13v13h-13z" fill="#1b3ecb" stroke="#0d1f90" /><circle cx="6" cy="6" r="3.500" fill="#dbe8fd" /><path d="M6 8l7 6V9L9 5z" fill="#a8c8fb" /></Tool>
    <HSep />
    <Tool label="Sweep boss"><path d="M1 9l3-2c2 0 2-5 6-5l5 1v4c-4-1-3 4-7 6l-4 2-3-2z" fill="#2f5fe0" stroke="#0d1f90" /><path d="M2 9c5 1 4-6 9-6" stroke="#a8c8fb" strokeWidth="1.500" /></Tool>
    <Tool label="Sweep cut"><Solid /><path d="M2 9c4 1 5-3 8-5l3 2c-3 1-3 6-7 8z" fill="#a8c8fb" stroke="#0d1f90" /></Tool>
    <HSep />
    <Tool label="Helical boss"><path d="M3 4l10-2M2 8l12-3M2 12l12-3M4 15l9-3" stroke="#101050" strokeWidth="1.600" /><path d="M5 1l2 4-2 4 2 3-1 4M10 1l2 3-2 4 2 3-1 4" stroke="#2b58da" strokeWidth="2" /></Tool>
    <Tool label="Helical cut"><path d="M5 1h8v14H5z" fill="#2b58da" stroke="#0d1f90" /><path d="M2 4h11M2 8h11M2 12h11" stroke="#0a124f" strokeWidth="1.500" /><path d="M6 2.500h5M6 6h5M6 10h5" stroke="#a8c8fb" /></Tool>
    <HSep />
    <Tool label="Boolean"><path d="M1 5l4-3 5 2v6l-5 2-4-2z" fill="#3a66e2" stroke="#0d1f90" /><path d="M6 8l4-2 5 2v5l-4 2.500L6 13z" fill="#3d9b40" stroke="#14501a" /><path d="M11.500 0v8M7.500 4h8" stroke="#333" strokeWidth="3" /><path d="M11.500.500v7M8 4h7" stroke="#f4e424" strokeWidth="1.800" /></Tool>
    <Flyout label="Boolean options" />
    <HSep />
    <Tool label="Thicken surface"><path d="M1 8c1-3 3-2 5-4s4-3 8-2l1 4c-2 1-3 0-4 3l1 4c-2 0-3 1-5 1s-4-1-6-2z" fill="#ab8ad8" /><path d="M5 6l6-3 3 3-6 5z" fill="#5b6fe0" stroke="#4338a8" /></Tool>
    <Tool label="Replace surface"><path d="M1 4c3-3 5 2 8-1v4C6 9 4 5 1 7z" fill="#b66cc0" /><path d="M4 11c3-3 5 2 9-1v3c-4 3-6-1-9 1z" fill="#3a5fe0" /><path d="M11 2c4 0 4 3 3 6M12 7l2 2 2-2" stroke="#2c9a35" strokeWidth="1.300" /></Tool>
    <HSep />
    <Tool label="Fillet"><path d="M1.500 8c0-4 3-6 6-6h3.500l4 3v6l-3 4H1.500z" fill="#2d5de0" stroke="#0d1f90" /><path d="M2 8c0-4 3-5.500 6-5.500L12 6v8.500H2z" fill="#7fa8f6" /><path d="M3 8c0-3 2-4.500 5-4.500" stroke="#e2eefe" strokeWidth="1.500" /></Tool>
    <Tool label="Chamfer"><path d="M1.500 7 6 2h6l3 3v6l-3 4H1.500z" fill="#2d5de0" stroke="#0d1f90" /><path d="M2 8l4-5 6 3v8.500H2z" fill="#7fa8f6" /><path d="M3 7l3-3.500 4 1" stroke="#e2eefe" strokeWidth="1.300" /></Tool>
    <HSep />
    <Tool label="Shell"><Solid /><path d="M4 6h6v6H4z" fill="#06124f" stroke="#c2d8fc" /></Tool>
    <Tool label="Draft"><Solid /><path d="M3 6l6 3-6 4z" fill="#c2d8fc" /></Tool>
    <Tool label="Hole"><Solid /><circle cx="7" cy="9" r="2.800" fill="#06124f" stroke="#dbe8fd" /></Tool>
    <Tool label="Copy feature"><path d="M1 1h6v9H1z" fill="#f4f0b4" stroke="#777" /><path d="M4 7l4-3 3 2 4 1v7l-5 1-6-4z" fill="#2452da" stroke="#0d1f90" /><path d="M5 8l4-3 4 3" stroke="#a8c8fb" strokeWidth="1.500" /></Tool>
    <HSep />
    <button type="button" aria-label="Equation editor" className="flex h-[22px] w-[22px] items-center justify-center font-['DejaVu_Serif',serif] text-[9px] text-black"><b>f</b>(x)</button>
    <HSep />
    <Tool label="Feature pattern"><path d="M5 1v6M3 5l2 2 2-2M11 1v6M9 5l2 2 2-2" stroke="#8b1c1c" strokeWidth="1.300" /><path d="M1 11h14M1 9v5M15 9v5M2 14l2-3M14 14l-2-3" stroke="#1b3ed0" strokeWidth="1.700" /></Tool>
    <Flyout label="Pattern options" />
  </SideBar>
);

const StatusBar = () => (
  <footer className="flex h-5 shrink-0 items-center border-t border-[#a3a2ac] bg-[#dfdee5] pb-[3px] pl-[4px]">
    <span className="flex-1">Saves to the repository</span>
    <span className="flex h-4 w-[74px] items-center justify-end border-l border-[#a3a2ac] pr-[6px]">
      <Icon>
        <circle cx="8" cy="8" r="7" fill="#4b4238" stroke="#222" />
        <path d="M8 1l1.500 5L15 8l-5.500 2L8 15l-1.500-5L1 8l5.500-2z" fill="#eddcb0" />
        <path d="M8 1v14M1 8h7" stroke={SKY} strokeWidth=".5" />
      </Icon>
    </span>
  </footer>
);

export default function App() {
  return (
    <div className="flex h-screen flex-col overflow-hidden bg-[#e0dfe6] font-['Liberation_Sans',Arial,sans-serif] text-[11px] leading-4 text-black">
      <TitleBar />
      <MenuBar />
      <div className="flex shrink-0">
        <StandardBar />
        <SelectionBar />
        <VisibilityBar />
      </div>
      <div className="flex shrink-0">
        <RedlineBar />
        <InsertBar />
        <ViewBar />
        <OrientationBar />
      </div>
      <div className="flex min-h-0 flex-1 pt-[3px]">
        <DesignExplorer />
        <ModelView />
        <SketchBar />
        <FeatureBar />
        <span className="w-[3px]" />
      </div>
      <StatusBar />
    </div>
  );
}
